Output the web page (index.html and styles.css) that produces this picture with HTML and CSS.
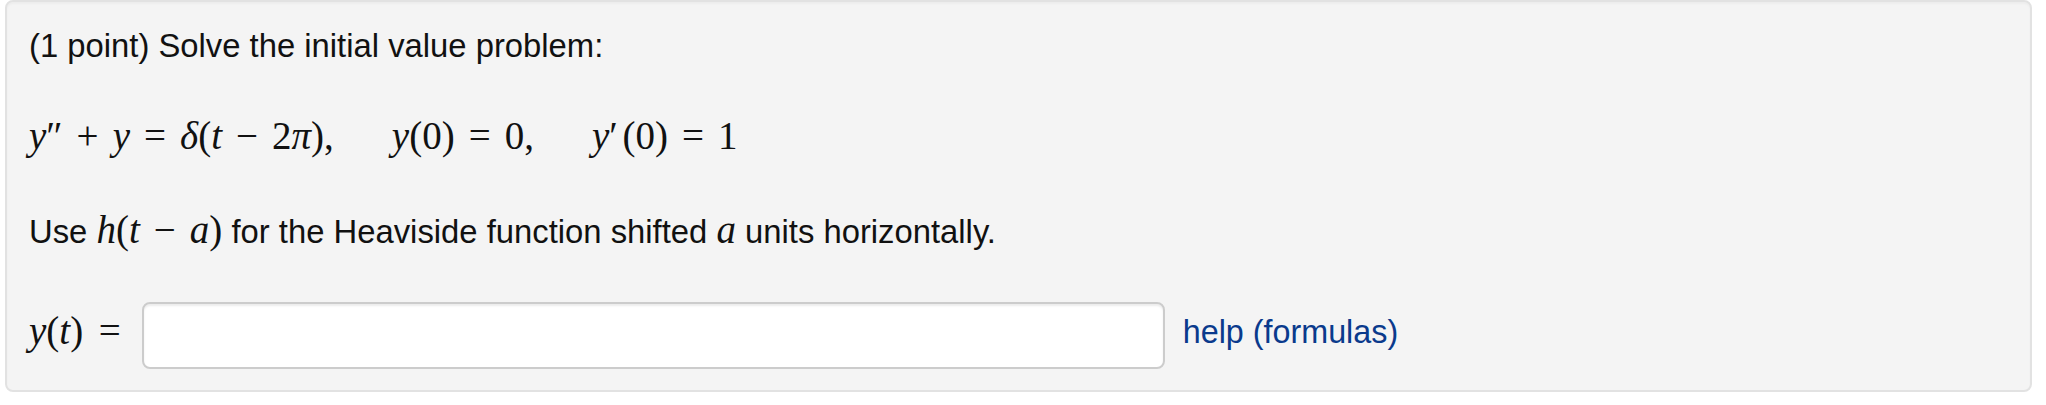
FILE: index.html
```html
<!DOCTYPE html>
<html lang="en">
<head>
<meta charset="utf-8">
<title>Problem</title>
<link rel="stylesheet" href="styles.css">
</head>
<body>
<div class="well">
  <p class="row text">(1 point) Solve the initial value problem:</p>
  <p class="row math-row">
    <span class="eq"><i>y</i>″<span class="op">+</span><i>y</i><span class="op">=</span><i>δ</i>(<i>t</i><span class="op">−</span>2<i>π</i>),</span>
    <span class="eq"><i>y</i>(0)<span class="op">=</span>0,</span>
    <span class="eq"><i>y</i><span class="prime">′</span>(0)<span class="op">=</span>1</span>
  </p>
  <p class="row text">Use <span class="m"><i>h</i>(<i>t</i><span class="op">−</span><i>a</i>)</span> for the Heaviside function shifted <span class="m"><i>a</i></span> units horizontally.</p>
  <div class="answer">
    <span class="m label"><i>y</i>(<i>t</i>)<span class="op last">=</span></span>
    <input class="ans" type="text" aria-label="answer">
    <a class="help" href="#">help (formulas)</a>
  </div>
</div>
</body>
</html>
```

FILE: styles.css
```css
html, body {
  margin: 0;
  padding: 0;
  background: #ffffff;
}

body {
  font-family: "Liberation Sans", Arial, Helvetica, sans-serif;
  color: #111111;
}

.well {
  margin: 0 14px 0 5px;
  padding: 25px 20px 21px 22px;
  background: #f4f4f4;
  border: 2px solid #e2e2e2;
  border-radius: 8px;
  box-shadow: inset 0 2px 2px rgba(0, 0, 0, 0.03);
}

.row {
  margin: 0;
}

.text {
  font-size: 32.8px;
  line-height: 38px;
}

.row.text + .math-row {
  margin-top: 48px;
}

.math-row {
  display: flex;
  gap: 58px;
  font-family: "Liberation Serif", "Times New Roman", serif;
  font-size: 39px;
  line-height: 46px;
}

.math-row + .text {
  margin-top: 50px;
  line-height: 46px;
}

.m {
  font-family: "Liberation Serif", "Times New Roman", serif;
  font-size: 39px;
  line-height: 1;
}

i {
  font-style: italic;
}

.prime {
  padding-right: 0.12em;
}

.op {
  padding: 0 0.36em;
}

.op.last {
  padding-right: 0;
}

.answer {
  margin-top: 47px;
  display: flex;
  align-items: center;
}

.label {
  margin-bottom: 10px;
  margin-right: 21px;
}

.label .op {
  padding-left: 0.4em;
}

.ans {
  box-sizing: border-box;
  width: 1023px;
  height: 67px;
  margin: 0;
  padding: 8px 14px;
  background: #ffffff;
  border: 2px solid #cccccc;
  border-radius: 8px;
  box-shadow: inset 0 2px 2px rgba(0, 0, 0, 0.075);
  font-size: 28px;
  outline: none;
}

.help {
  margin-left: 18px;
  margin-bottom: 7px;
  font-size: 32.3px;
  line-height: 38px;
  color: #0a3a8c;
  text-decoration: none;
}
```
